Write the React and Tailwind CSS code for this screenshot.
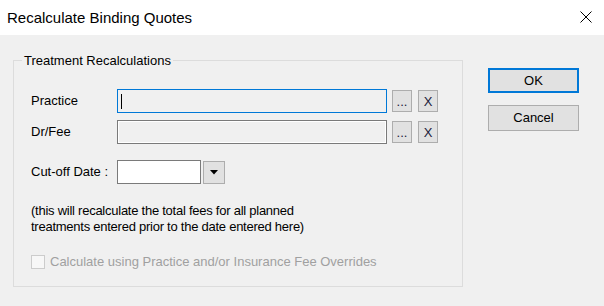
import React from 'react';

const font = { fontFamily: '"Liberation Sans", Arial, sans-serif' };

function SmallButton({ children }) {
    return (
        <button
            type="button"
            className="ml-[5px] flex h-[22px] w-[20px] items-center justify-center border border-[#adadad] bg-[#e1e1e1] text-[13px] leading-none text-[#1a1a3a]"
        >
            {children}
        </button>
    );
}

export default function App() {
    return (
        <div className="flex h-[306px] w-[604px] flex-col bg-[#f0f0f0] text-[13px] text-black" style={font}>
            {/* Title bar */}
            <div className="flex h-[35px] items-center justify-between bg-white pl-[7px] pr-[12px]">
                <span className="text-[15px] leading-none">Recalculate Binding Quotes</span>
                <svg width="12" height="12" viewBox="0 0 12 12" className="mb-[1px]">
                    <path d="M0.5 0.5 L11.5 11.5 M11.5 0.5 L0.5 11.5" stroke="#000" strokeWidth="1" />
                </svg>
            </div>

            {/* Body */}
            <div className="flex items-start pl-[13px] pt-[25px]">
                {/* Group box */}
                <div className="relative h-[227px] w-[450px] border border-[#dcdcdc] pl-[17px]">
                    <span className="absolute left-[8px] top-[-8px] bg-[#f0f0f0] px-[2px] leading-[15px]">
                        Treatment Recalculations
                    </span>

                    {/* Practice */}
                    <div className="mt-[28px] flex h-[24px] items-center">
                        <span className="w-[86px]">Practice</span>
                        <div className="flex h-[24px] w-[270px] items-center border border-[#0078d7] bg-[#f0f0f0] pl-[3px]">
                            <div className="h-[15px] w-px bg-black" />
                        </div>
                        <SmallButton>...</SmallButton>
                        <div className="ml-px">
                            <SmallButton>X</SmallButton>
                        </div>
                    </div>

                    {/* Dr/Fee */}
                    <div className="mt-[7px] flex h-[24px] items-center">
                        <span className="w-[86px]">Dr/Fee</span>
                        <div className="h-[24px] w-[270px] border border-[#7a7a7a] bg-[#f0f0f0] shadow-[inset_1px_1px_0_#ffffff,inset_-1px_-1px_0_#ffffff]" />
                        <SmallButton>...</SmallButton>
                        <div className="ml-px">
                            <SmallButton>X</SmallButton>
                        </div>
                    </div>

                    {/* Cut-off date */}
                    <div className="mt-[16px] flex h-[24px] items-center">
                        <span className="w-[86px]">Cut-off Date :</span>
                        <div className="h-[24px] w-[84px] border border-[#7a7a7a] bg-white" />
                        <div className="ml-[2px] flex h-[23px] w-[22px] items-center justify-center border border-[#adadad] bg-[#e1e1e1]">
                            <svg width="8" height="5" viewBox="0 0 8 5">
                                <path d="M0 0 H8 L4 4.5 Z" fill="#000" />
                            </svg>
                        </div>
                    </div>

                    {/* Description */}
                    <p className="mt-[19px] leading-[16px] tracking-[-0.25px]">
                        (this will recalculate the total fees for all planned
                        <br />
                        treatments entered prior to the date entered here)
                    </p>

                    {/* Checkbox */}
                    <div className="mt-[17px] flex items-center">
                        <div className="h-[14px] w-[14px] border border-[#cccccc] bg-[#f7f7f7]" />
                        <span className="ml-[5px] text-[#a0a0a0]">
                            Calculate using Practice and/or Insurance Fee Overrides
                        </span>
                    </div>
                </div>

                {/* Right buttons */}
                <div className="ml-[25px] mt-[8px] flex flex-col gap-[12px]">
                    <button
                        type="button"
                        className="h-[25px] w-[91px] border-2 border-[#0078d7] bg-[#e1e1e1] text-[13px]"
                    >
                        OK
                    </button>
                    <button
                        type="button"
                        className="h-[26px] w-[91px] border border-[#adadad] bg-[#e1e1e1] text-[13px]"
                    >
                        Cancel
                    </button>
                </div>
            </div>
        </div>
    );
}
